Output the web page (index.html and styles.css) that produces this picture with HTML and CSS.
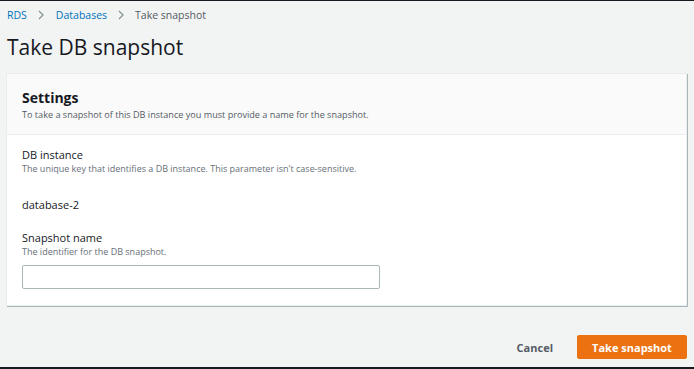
FILE: index.html
```html
<!DOCTYPE html>
<html lang="en">
<head>
    <meta charset="UTF-8" />
    <meta name="viewport" content="width=device-width, initial-scale=1.0" />
    <title>Take DB snapshot</title>
    <link rel="stylesheet" href="styles.css">
</head>
<body>
    <div class="page">
        <nav class="breadcrumbs">
            <a href="#" class="crumb-link">RDS</a>
            <span class="crumb-sep">
                <svg width="8" height="10" viewBox="0 0 8 10"><path d="M2 1 L6 5 L2 9" fill="none" stroke="#879596" stroke-width="1.3"/></svg>
            </span>
            <a href="#" class="crumb-link">Databases</a>
            <span class="crumb-sep">
                <svg width="8" height="10" viewBox="0 0 8 10"><path d="M2 1 L6 5 L2 9" fill="none" stroke="#879596" stroke-width="1.3"/></svg>
            </span>
            <span class="crumb-current">Take snapshot</span>
        </nav>

        <h1 class="page-title">Take DB snapshot</h1>

        <div class="card">
            <div class="card-header">
                <h2>Settings</h2>
                <p>To take a snapshot of this DB instance you must provide a name for the snapshot.</p>
            </div>
            <div class="card-body">
                <div class="field">
                    <div class="field-label">DB instance</div>
                    <div class="field-desc">The unique key that identifies a DB instance. This parameter isn't case-sensitive.</div>
                    <div class="field-value">database-2</div>
                </div>
                <div class="field">
                    <div class="field-label">Snapshot name</div>
                    <div class="field-desc">The identifier for the DB snapshot.</div>
                    <input type="text" class="text-input" />
                </div>
            </div>
        </div>

        <div class="actions">
            <button class="btn-link">Cancel</button>
            <button class="btn-primary">Take snapshot</button>
        </div>
    </div>
</body>
</html>
```

FILE: styles.css
```css
html, body {
    margin: 0;
    height: 100%;
}
body {
    font-family: "Open Sans", Arial, sans-serif;
    background-color: #f2f3f3;
    color: #16191f;
    border-top: 1px solid #16191f;
    border-bottom: 2px solid #16191f;
    box-sizing: border-box;
}
.page {
    padding: 0 7px 0 6px;
}
.breadcrumbs {
    display: flex;
    align-items: center;
    height: 27px;
    font-size: 10.5px;
}
.crumb-link {
    color: #0073bb;
    text-decoration: none;
    margin-left: 1px;
}
.crumb-sep {
    display: flex;
    margin: 0 10px;
}
.crumb-current {
    color: #545b64;
}
.page-title {
    margin: 3px 0 0 1px;
    font-size: 21px;
    font-weight: 400;
    line-height: 32px;
    height: 42px;
}
.card {
    background-color: #fff;
    border: 1px solid #eaeded;
    box-shadow: 1px 1px 0 0 #aab7b8;
}
.card-header {
    background-color: #fafafa;
    border-bottom: 1px solid #eaeded;
    padding: 14px 15px 12px;
}
.card-header h2 {
    margin: 0;
    font-size: 14px;
    font-weight: 700;
    line-height: 20px;
}
.card-header p {
    margin: 0;
    font-size: 9.1px;
    line-height: 14px;
    color: #545b64;
}
.card-body {
    padding: 12px 15px 16px;
}
.field-label {
    font-size: 11px;
    line-height: 16px;
}
.field-desc {
    font-size: 9px;
    line-height: 12px;
    color: #687078;
}
.field-value {
    font-size: 11px;
    line-height: 16px;
    margin: 22px 0 17px;
}
.text-input {
    display: block;
    box-sizing: border-box;
    width: 358px;
    height: 24px;
    margin-top: 7px;
    border: 1px solid #aab7b8;
    border-radius: 2px;
    background: #fff;
}
.actions {
    display: flex;
    justify-content: flex-end;
    align-items: center;
    gap: 24px;
    margin-top: 29px;
}
.btn-link {
    background: none;
    border: none;
    font-family: inherit;
    font-size: 11px;
    font-weight: 700;
    color: #545b64;
    padding: 0;
}
.btn-primary {
    background-color: #ec7211;
    border: 1px solid #ec7211;
    border-radius: 2px;
    color: #fff;
    font-family: inherit;
    font-size: 11px;
    font-weight: 700;
    width: 110px;
    height: 24px;
    padding: 0;
}
```
